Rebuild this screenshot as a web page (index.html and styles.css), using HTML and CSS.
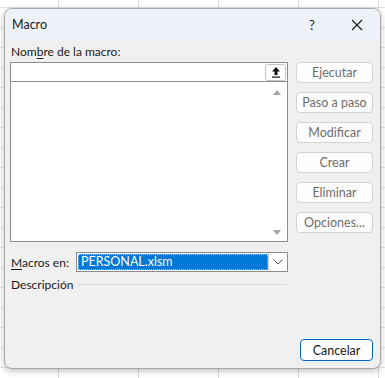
FILE: index.html
```html
<!DOCTYPE html>
<html lang="es">
<head>
    <meta charset="UTF-8">
    <meta name="viewport" content="width=device-width, initial-scale=1.0">
    <title>Macro</title>
    <link rel="stylesheet" href="styles.css">
</head>
<body>
    <div class="sheet">
        <div class="dialog">
            <div class="titlebar">
                <span class="title">Macro</span>
                <span class="help">?</span>
                <span class="close">
                    <svg width="12" height="12" viewBox="0 0 12 12">
                        <path d="M1 1 L11 11 M11 1 L1 11" stroke="#1a1a1a" stroke-width="1.1" fill="none"/>
                    </svg>
                </span>
            </div>

            <div class="content">
                <div class="label-row">Nom<u>b</u>re de la macro:</div>

                <div class="main">
                    <div class="left-col">
                        <div class="name-input">
                            <span class="ref-btn">
                                <svg width="10" height="12" viewBox="0 0 10 12">
                                    <path d="M5 1 L1 5.5 H3.5 V9 H6.5 V5.5 H9 Z" fill="#111"/>
                                    <rect x="1" y="10.5" width="8" height="1.2" fill="#111"/>
                                </svg>
                            </span>
                        </div>
                        <div class="listbox">
                            <span class="arrow up"></span>
                            <span class="arrow down"></span>
                        </div>
                    </div>
                    <div class="buttons">
                        <button class="btn">Ejecutar</button>
                        <button class="btn">Paso a paso</button>
                        <button class="btn">Modificar</button>
                        <button class="btn">Crear</button>
                        <button class="btn">Eliminar</button>
                        <button class="btn">Opciones...</button>
                    </div>
                </div>

                <div class="macros-row">
                    <span class="row-label"><u>M</u>acros en:</span>
                    <div class="select">
                        <span class="select-value">PERSONAL.xlsm</span>
                        <span class="select-drop">
                            <svg width="10" height="6" viewBox="0 0 10 6">
                                <path d="M0.5 0.5 L5 5 L9.5 0.5" stroke="#555" stroke-width="1" fill="none"/>
                            </svg>
                        </span>
                    </div>
                </div>

                <div class="desc-row">
                    <span class="row-label desc-label">Descripción</span>
                    <span class="desc-line"></span>
                </div>

                <div class="footer">
                    <button class="btn cancel">Cancelar</button>
                </div>
            </div>
        </div>
    </div>
</body>
</html>
```

FILE: styles.css
```css
* {
    margin: 0;
    padding: 0;
    box-sizing: border-box;
}

body {
    font-family: 'Lato', 'Noto Sans', sans-serif;
    font-size: 12px;
    color: #1a1a1a;
    background: #fff;
}

.sheet {
    width: 385px;
    height: 378px;
    padding: 8px 4px 0 4px;
    background-color: #fff;
    background-image:
        linear-gradient(to right, #d9d9d9 1px, transparent 1px),
        linear-gradient(to bottom, #e3e3e3 1px, transparent 1px);
    background-size: 80px 20px;
    background-position: 58px 7px;
    overflow: hidden;
}

.dialog {
    width: 377px;
    height: 361px;
    background: #f0f0f0;
    border: 1px solid #a9a9a9;
    border-radius: 8px;
    box-shadow: 0 2px 6px rgba(0, 0, 0, 0.25);
    display: flex;
    flex-direction: column;
    overflow: hidden;
}

.titlebar {
    height: 31px;
    background: #eef2f8;
    display: flex;
    align-items: center;
    padding-left: 7px;
    flex-shrink: 0;
}

.title {
    flex: 1;
    font-size: 12.5px;
}

.help {
    width: 20px;
    text-align: center;
    font-size: 13px;
    margin-right: 25px;
}

.close {
    width: 20px;
    display: flex;
    justify-content: center;
    margin-right: 13px;
}

.content {
    flex: 1;
    display: flex;
    flex-direction: column;
    padding: 4px 7px 7px 5px;
}

.label-row {
    line-height: 16px;
    margin-bottom: 2px;
    padding-left: 1px;
}

u {
    text-decoration-thickness: 1px;
    text-underline-offset: 2px;
}

.main {
    display: flex;
    gap: 8px;
    height: 180px;
}

.left-col {
    width: 278px;
    display: flex;
    flex-direction: column;
}

.name-input {
    height: 19px;
    background: #fff;
    border: 1px solid #8c8c8c;
    border-bottom: none;
    display: flex;
    justify-content: flex-end;
    align-items: center;
    padding-right: 1px;
}

.ref-btn {
    width: 21px;
    height: 17px;
    border: 1px solid #c4c4c4;
    border-radius: 3px;
    background: #fdfdfd;
    display: flex;
    justify-content: center;
    align-items: center;
}

.listbox {
    flex: 1;
    background: #fff;
    border: 1px solid #8c8c8c;
    position: relative;
}

.arrow {
    position: absolute;
    right: 6px;
    width: 0;
    height: 0;
    border-left: 4px solid transparent;
    border-right: 4px solid transparent;
}

.arrow.up {
    top: 8px;
    border-bottom: 5px solid #a6a6a6;
}

.arrow.down {
    bottom: 6px;
    border-top: 5px solid #a6a6a6;
}

.buttons {
    width: 77px;
    display: flex;
    flex-direction: column;
    gap: 9px;
}

.btn {
    height: 21px;
    font-family: inherit;
    font-size: 12.5px;
    color: #6d6d6d;
    background: #fdfdfd;
    border: 1px solid #d2d2d2;
    border-radius: 4px;
}

.macros-row {
    display: flex;
    align-items: center;
    margin-top: 10px;
    height: 20px;
}

.row-label {
    width: 66px;
    padding-left: 1px;
    white-space: nowrap;
}

.desc-label {
    width: 67px;
}

.select {
    width: 212px;
    height: 20px;
    background: #fff;
    border: 1px solid #8c8c8c;
    display: flex;
}

.select-value {
    flex: 1;
    background: #0078d7;
    color: #fff;
    margin: 1px 0 1px 1px;
    padding-left: 3px;
    line-height: 16px;
    font-size: 12.5px;
    outline: 1px dotted #9cc7ee;
    outline-offset: -1px;
}

.select-drop {
    width: 19px;
    display: flex;
    justify-content: center;
    align-items: center;
    border-left: 1px solid #d0d0d0;
}

.desc-row {
    display: flex;
    align-items: center;
    height: 24px;
}

.desc-line {
    width: 210px;
    height: 1px;
    background: #dcdcdc;
}

.footer {
    margin-top: auto;
    display: flex;
    justify-content: flex-end;
}

.btn.cancel {
    width: 73px;
    height: 22px;
    background: #fff;
    color: #1a1a1a;
    border-color: #0067c0;
}
```
